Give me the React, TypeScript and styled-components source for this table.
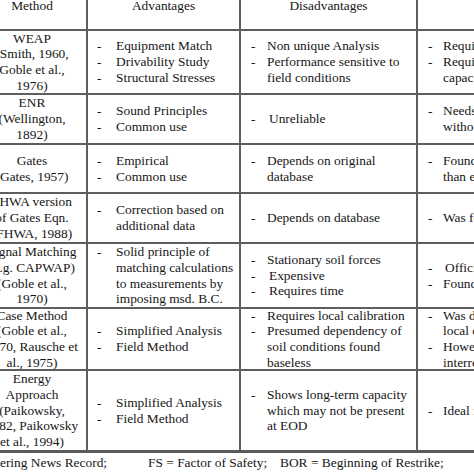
import { Fragment } from "react";
import styled, { createGlobalStyle } from "styled-components";

const GlobalStyle = createGlobalStyle`
  html, body {
    margin: 0;
    padding: 0;
    background: #ffffff;
  }
  body {
    font-family: "Liberation Serif", "Times New Roman", serif;
    color: #161616;
  }
`;

const Page = styled.div`
  width: 474px;
  height: 474px;
  overflow: hidden;
  background: #ffffff;
  font-size: 13.4px;
  line-height: 15.7px;
`;

const Table = styled.div`
  display: grid;
  grid-template-columns: 108px 151px 175px 200px;
  grid-template-rows: 48px 62px 48px 47px 48px 63px 60px 79px;
  gap: 2px;
  width: fit-content;
  margin: -19px 0 0 -22px;
  background: #5e5e5e;
  border-bottom: 3px solid #5a5a5a;
`;

const HeaderCell = styled.div`
  background: #ffffff;
  display: flex;
  align-items: center;
  justify-content: center;
  text-align: center;
  padding-top: 1px;
`;

const MethodCell = styled.div`
  background: #ffffff;
  display: flex;
  align-items: center;
  justify-content: center;
  text-align: center;
  white-space: pre-line;
`;

const ListCell = styled.div<{ $pad: number }>`
  background: #ffffff;
  display: flex;
  flex-direction: column;
  justify-content: center;
  padding-left: ${(p) => p.$pad}px;
  white-space: nowrap;
`;

const Item = styled.div`
  display: flex;
`;

const Dash = styled.span<{ $w: number }>`
  width: ${(p) => p.$w}px;
  flex-shrink: 0;
`;

const ItemText = styled.span<{ $extra?: boolean }>`
  white-space: pre;
  padding-left: ${(p) => (p.$extra ? 2 : 0)}px;
`;

const Footer = styled.div`
  display: flex;
  margin: 2px 0 0 -79px;
  white-space: nowrap;
`;

const FooterItem = styled.span<{ $w?: number }>`
  flex-shrink: 0;
  width: ${(p) => (p.$w ? `${p.$w}px` : "auto")};
`;

type Entry = { text: string; extra?: boolean };

type Row = {
  method: string;
  adv: Entry[];
  dis: Entry[];
  rem: Entry[];
};

const rows: Row[] = [
  {
    method: "WEAP\n(Smith, 1960,\nGoble et al.,\n1976)",
    adv: [{ text: "Equipment Match" }, { text: "Drivability Study" }, { text: "Structural Stresses" }],
    dis: [{ text: "Non unique Analysis" }, { text: "Performance sensitive to\nfield conditions" }],
    rem: [{ text: "Requires skilled user" }, { text: "Requires assumed\ncapacity distribution" }],
  },
  {
    method: "ENR\n(Wellington,\n1892)",
    adv: [{ text: "Sound Principles" }, { text: "Common use" }],
    dis: [{ text: "Unreliable", extra: true }],
    rem: [{ text: "Needs correction\nwithout basis" }],
  },
  {
    method: "Gates\n(Gates, 1957)",
    adv: [{ text: "Empirical" }, { text: "Common use" }],
    dis: [{ text: "Depends on original\ndatabase" }],
    rem: [{ text: "Found more reliable\nthan expected" }],
  },
  {
    method: "FHWA version\nof Gates Eqn.\n(FHWA, 1988)",
    adv: [{ text: "Correction based on\nadditional data" }],
    dis: [{ text: "Depends on database" }],
    rem: [{ text: "Was found conservative" }],
  },
  {
    method: "Signal Matching\n(e.g. CAPWAP)\n(Goble et al.,\n1970)",
    adv: [{ text: "Solid principle of\nmatching calculations\nto measurements by\nimposing msd. B.C." }],
    dis: [{ text: "Stationary soil forces" }, { text: "Expensive", extra: true }, { text: "Requires time", extra: true }],
    rem: [{ text: "Official method", extra: true }, { text: "Found reliable" }],
  },
  {
    method: "Case Method\n(Goble et al.,\n1970, Rausche et\nal., 1975)",
    adv: [{ text: "Simplified Analysis" }, { text: "Field Method" }],
    dis: [
      { text: "Requires local calibration" },
      { text: "Presumed dependency of\nsoil conditions found\nbaseless" },
    ],
    rem: [{ text: "Was developed for\nlocal calibration" }, { text: "However,\ninterrelated" }],
  },
  {
    method: "Energy\nApproach\n(Paikowsky,\n1982, Paikowsky\net al., 1994)",
    adv: [{ text: "Simplified Analysis" }, { text: "Field Method" }],
    dis: [{ text: "Shows long-term capacity\nwhich may not be present\nat EOD" }],
    rem: [{ text: "Ideal for field use" }],
  },
];

function List({ items, pad, dash }: { items: Entry[]; pad: number; dash: number }) {
  return (
    <ListCell $pad={pad}>
      {items.map((it, i) => (
        <Item key={i}>
          <Dash $w={dash}>-</Dash>
          <ItemText $extra={it.extra}>{it.text}</ItemText>
        </Item>
      ))}
    </ListCell>
  );
}

export default function App() {
  return (
    <Page>
      <GlobalStyle />
      <Table>
        <HeaderCell>Method</HeaderCell>
        <HeaderCell>Advantages</HeaderCell>
        <HeaderCell>Disadvantages</HeaderCell>
        <HeaderCell>Remarks</HeaderCell>
        {rows.map((r, i) => (
          <Fragment key={i}>
            <MethodCell>{r.method}</MethodCell>
            <List items={r.adv} pad={9} dash={19} />
            <List items={r.dis} pad={10} dash={16} />
            <List items={r.rem} pad={10} dash={15} />
          </Fragment>
        ))}
      </Table>
      <Footer>
        <FooterItem $w={227}>ENR = Engineering News Record;</FooterItem>
        <FooterItem $w={132}>FS = Factor of Safety;</FooterItem>
        <FooterItem>BOR = Beginning of Restrike;</FooterItem>
      </Footer>
    </Page>
  );
}
